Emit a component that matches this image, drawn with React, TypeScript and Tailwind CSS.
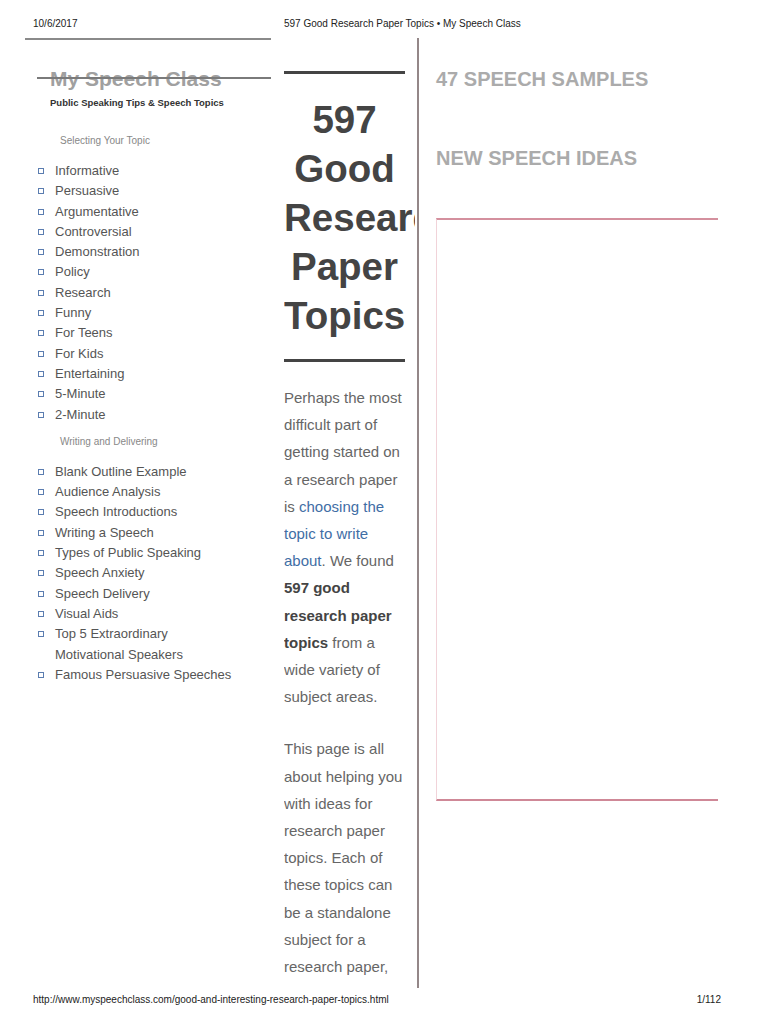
import React from 'react';

const selecting = [
  'Informative',
  'Persuasive',
  'Argumentative',
  'Controversial',
  'Demonstration',
  'Policy',
  'Research',
  'Funny',
  'For Teens',
  'For Kids',
  'Entertaining',
  '5-Minute',
  '2-Minute',
];

const writing = [
  'Blank Outline Example',
  'Audience Analysis',
  'Speech Introductions',
  'Writing a Speech',
  'Types of Public Speaking',
  'Speech Anxiety',
  'Speech Delivery',
  'Visual Aids',
  'Top 5 Extraordinary Motivational Speakers',
  'Famous Persuasive Speeches',
];

const NavList: React.FC<{ items: string[] }> = ({ items }) => (
  <ul className="w-[215px]">
    {items.map((item) => (
      <li key={item} className="flex items-start text-[13px] leading-[20.3px] text-[#555]">
        <span className="mt-[7px] ml-[13px] mr-[11px] h-[6px] w-[6px] shrink-0 border border-[#5b7db0]" />
        <span>{item}</span>
      </li>
    ))}
  </ul>
);

const App: React.FC = () => {
  return (
    <div className="relative flex h-[1024px] w-[768px] flex-col bg-white font-['Liberation_Sans',Arial,sans-serif]">
      {/* print header */}
      <div className="flex h-[38px] pt-[18px] text-[10px] leading-[12px] text-[#222]">
        <div className="w-[284px] pl-[33px]">10/6/2017</div>
        <div>597 Good Research Paper Topics • My Speech Class</div>
      </div>

      <div className="flex h-[950px]">
        {/* left sidebar */}
        <div className="ml-[25px] w-[246px] border-t-2 border-[#8a8a8a]">
          <div className="relative mt-[27px] pl-[25px]">
            <div className="text-[21px] font-bold leading-[24px] text-[#a0a0a0]">My Speech Class</div>
            <div className="absolute left-[12px] right-0 top-[10px] h-[2px] bg-[#7a7a7a]" />
          </div>
          <div className="mt-[5px] pl-[25px] text-[9.5px] font-bold leading-[14px] text-[#333]">
            Public Speaking Tips &amp; Speech Topics
          </div>
          <div className="mt-[24px] pl-[35px] text-[10px] leading-[14px] text-[#888]">Selecting Your Topic</div>
          <div className="mt-[13px]">
            <NavList items={selecting} />
          </div>
          <div className="mt-[10px] pl-[35px] text-[10px] leading-[14px] text-[#888]">Writing and Delivering</div>
          <div className="mt-[13px]">
            <NavList items={writing} />
          </div>
        </div>

        {/* article column */}
        <div className="ml-[13px] mr-[2px] w-[131px] overflow-hidden">
          <div className="w-[121px]">
            <div className="mt-[33px] h-[3px] bg-[#444]" />
            <h1 className="mt-[21px] text-center text-[38.5px] font-bold leading-[49px] text-[#444]">
              597 Good Research Paper Topics
            </h1>
            <div className="mt-[19px] h-[3px] bg-[#444]" />
            <p className="mt-[22px] text-[15px] leading-[27.2px] text-[#666]">
              Perhaps the most difficult part of getting started on a research paper is{' '}
              <a className="text-[#3f6ea5]">choosing the topic to write about</a>. We found{' '}
              <b className="text-[#444]">597 good research paper topics</b> from a wide variety of subject areas.
            </p>
            <p className="mt-[25px] text-[15px] leading-[27.2px] text-[#666]">
              This page is all about helping you with ideas for research paper topics. Each of these topics can
              be a standalone subject for a research paper, or the basis for further research.
            </p>
          </div>
        </div>

        {/* right column */}
        <div className="w-[301px] border-l-2 border-[#948788] pl-[17px]">
          <h2 className="mt-[29px] text-[20px] font-bold leading-[24px] text-[#ababab]">47 SPEECH SAMPLES</h2>
          <h2 className="mt-[55px] text-[20px] font-bold leading-[24px] text-[#ababab]">NEW SPEECH IDEAS</h2>
          <div className="mt-[48px] h-[583px] w-[282px] border-t-2 border-b-2 border-l border-t-[#d4909e] border-b-[#cf8897] border-l-[#f1d3d9]" />
        </div>
      </div>

      {/* print footer */}
      <div className="flex justify-between pl-[33px] pr-[47px] pt-[6px] text-[10px] leading-[12px] text-[#222]">
        <div>http://www.myspeechclass.com/good-and-interesting-research-paper-topics.html</div>
        <div>1/112</div>
      </div>
    </div>
  );
};

export default App;
